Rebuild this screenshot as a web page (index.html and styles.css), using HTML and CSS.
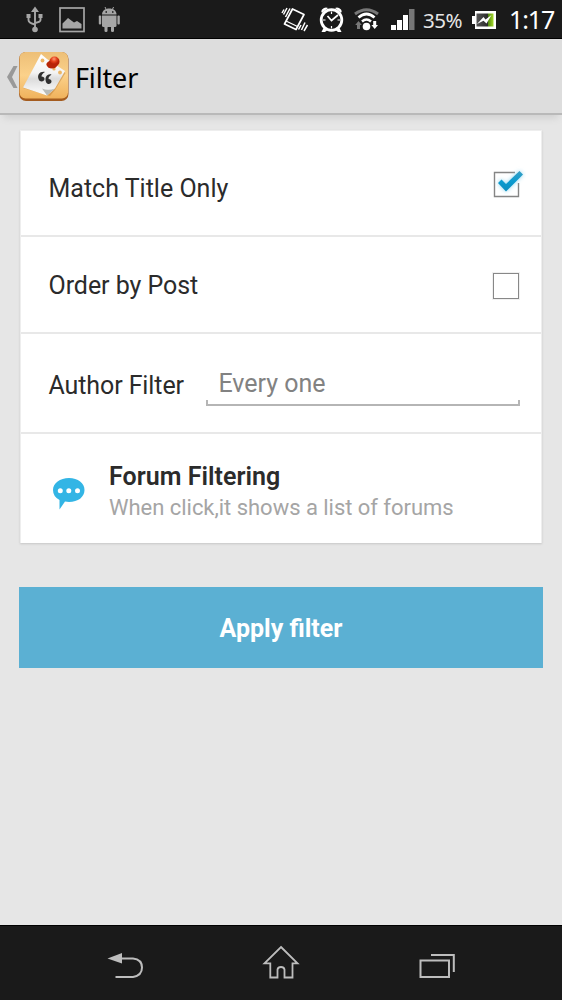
FILE: index.html
```html
<!DOCTYPE html>
<html lang="en">
<head>
<meta charset="utf-8">
<title>Filter</title>
<link rel="stylesheet" href="styles.css">
</head>
<body>
<div class="screen">
  <header class="status">
    <svg class="status-left" width="130" height="39" viewBox="0 0 130 39" fill="none" stroke="#a6a6a6">
      <path d="M35 10V29M28.500 17V20Q28.500 23 35 24.500M40.500 17V20Q40.500 22 35 23" stroke-width="1.900"/>
      <path d="M31 12 35 6.500 39 12Z" fill="#a6a6a6" stroke="none"/>
      <circle cx="35" cy="29.500" r="2.800" fill="#a6a6a6" stroke="none"/>
      <path d="M26.500 14H30.500V18H26.500ZM38.500 14H42.500V18H38.500Z" fill="#a6a6a6" stroke="none"/>
      <rect x="60" y="8" width="24" height="23.500" stroke-width="1.700"/>
      <path d="M62.500 28.500V23.500L68 18 74 22.500 77 21 81.500 24V28.500Z" fill="#a6a6a6" stroke="none"/>
      <g fill="#a6a6a6" stroke="none">
        <path d="M102 14.500C102 10.500 105.500 8.500 109.300 8.500S116.500 10.500 116.500 14.500Z"/>
        <path d="M102 15.500H116.500V25.500Q116.500 27 115 27H103.500Q102 27 102 25.500Z"/>
        <rect x="98.800" y="15.500" width="2.400" height="9" rx="1"/>
        <rect x="117.400" y="15.500" width="2.400" height="9" rx="1"/>
        <rect x="104.500" y="26" width="3" height="6" rx="1.300"/>
        <rect x="111" y="26" width="3" height="6" rx="1.300"/>
      </g>
      <path d="M105 7 106.500 10M113.600 7 112 10" stroke-width="1"/>
      <path d="M105.500 12H107M112 12H113.500" stroke="#1a1a1a" stroke-width="1.300"/>
    </svg>
    <svg class="status-right" width="145" height="39" viewBox="272 0 145 39" fill="none" stroke="#fff">
      <path d="M292.500 9 304 14.500 296 29.500 284.500 24Z" stroke-width="1.700" stroke-linejoin="round"/>
      <path d="M286 21 297.500 26.500" stroke-width="1.300"/>
      <path d="M287 8 283.500 14.500M290 8.500 285.500 17M284 9.500 282 13M301.500 30 305 22.500M304 31 307.500 25M298.500 29.500 301 25" stroke-width="1.500"/>
      <circle cx="331.500" cy="20" r="10.300" stroke-width="2.800"/>
      <path d="M322 9.500Q325 6.500 328 8L322 13Q320.500 11 322 9.500ZM341 9.500Q338 6.500 335 8L341 13Q342.500 11 341 9.500ZM323.500 28 321.500 32H325L327.500 30ZM339.500 28 341.500 32H338L335.500 30Z" fill="#fff" stroke="none"/>
      <path d="M327.500 16 331.500 20.500 338 15" stroke-width="1.700"/>
      <path d="M331.500 11.500V14M331.500 26V28.500M323 20H325.500M337.500 20H340" stroke-width="1.200"/>
      <path d="M355 14Q366.500 5.500 378 14" stroke="#777" stroke-width="3"/>
      <path d="M358.500 17.500Q366.500 10.500 374.500 17.500" stroke-width="2.800"/>
      <path d="M362 21.500Q366.500 17.500 371 21.500" stroke-width="2.500"/>
      <circle cx="366.500" cy="26.500" r="3.800" fill="#fff" stroke="none"/>
      <path d="M358.500 21 361.800 25H360V29H357V25H355.200Z" fill="#777" stroke="none"/>
      <path d="M374.700 29 371.400 25H373.200V21H376.200V25H378Z" fill="#fff" stroke="none"/>
      <path d="M391 25H396V30H391ZM397 20H402V30H397ZM403 15H408V30H403Z" fill="#fff" stroke="none"/>
      <path d="M409 9H414.500V30H409Z" fill="#777" stroke="none"/>
    </svg>
    <span class="percent">35%</span>
    <svg class="battery" width="25" height="18" viewBox="0 0 25 18">
      <defs><linearGradient id="cell" x1="0" x2="1"><stop stop-color="#555"/><stop offset=".65" stop-color="#2b2b2b"/><stop offset=".7" stop-color="#558a12"/><stop offset="1" stop-color="#a5db29"/></linearGradient></defs>
      <path d="M3 0H24V18H3V13H0V5H3Z" fill="#fff"/>
      <path d="M4.500 2.500H21.500V15.500H4.500Z" fill="url(#cell)"/>
      <path d="M5 13 11.500 6 13.500 8.500 19.500 4 14.500 12.500 11.500 9.800Z" fill="#fff"/>
    </svg>
    <span class="clock">1:17</span>
  </header>

  <div class="actionbar">
    <svg class="chevron" width="12" height="24" viewBox="0 0 12 24"><path d="M10.500 1 5 12 10.500 23H6.500L0 12 6.500 1Z" fill="#999"/></svg>
    <svg class="logo" width="51" height="51" viewBox="0 0 51 51">
      <defs>
        <linearGradient id="wood" x2="0" y2="1"><stop stop-color="#edbf77"/><stop offset=".5" stop-color="#fbd18a"/><stop offset="1" stop-color="#f0b25c"/></linearGradient>
        <linearGradient id="paper" x2="0" y2="1"><stop stop-color="#fff"/><stop offset=".45" stop-color="#f3f3f3"/><stop offset=".6" stop-color="#dcdcdc"/><stop offset="1" stop-color="#fff"/></linearGradient>
        <radialGradient id="pin" cx=".45" cy=".25"><stop stop-color="#ff9a72"/><stop offset=".55" stop-color="#e5421d"/><stop offset="1" stop-color="#b92408"/></radialGradient>
      </defs>
      <rect x="0" y="1" width="49.500" height="49" rx="7" fill="#a45c1f"/>
      <rect x="0.500" y="1" width="48.500" height="46.500" rx="6" fill="url(#wood)"/>
      <path d="M22 4 46.500 22 36 39 31 45 4 37Z" fill="#b97936" opacity=".45"/>
      <path d="M22 3 28 8 46 20 36 37.500 28 44.500 4 36.500Z" fill="url(#paper)"/>
      <path d="M28 44.500 23 37.500Q29 40 36 37.500Z" fill="#b9bcb9"/>
      <g fill="#edb564"><circle cx="23.500" cy="9.500" r="1.900"/><circle cx="29" cy="13" r="1.600"/><circle cx="35" cy="18" r="1.600"/><circle cx="41" cy="21.500" r="1.900"/></g>
      <path d="M26 21C21 20 18 24 19.500 28 21 32 25.500 30.500 25.500 28Q25.500 25.500 22.500 25.500 22.500 23 26 21ZM32.500 23.500C27.500 22.500 25.500 27 27 31 28.500 34.500 32.500 33 32.500 30.500Q32.500 28 29.500 28 29.500 25.500 32.500 23.500Z" fill="#303030"/>
      <ellipse cx="33" cy="13.500" rx="5.500" ry="4" fill="#b72609"/>
      <circle cx="35.500" cy="10.500" r="5" fill="url(#pin)"/>
    </svg>
    <h1 class="title">Filter</h1>
  </div>

  <main class="content">
    <section class="card">
      <div class="row row-match">
        <span class="label label-match">Match Title Only</span>
        <svg class="check" width="35" height="35" viewBox="0 0 35 35">
          <defs>
            <filter id="glow" x="-40%" y="-40%" width="180%" height="180%"><feGaussianBlur stdDeviation="2"/></filter>
            <linearGradient id="tick" x2="0" y2="1"><stop stop-color="#399fc4"/><stop offset=".5" stop-color="#0b9bd0"/><stop offset="1" stop-color="#0d8dbd"/></linearGradient>
          </defs>
          <path d="M24 6.500H3.500V30.500H27.500V17" fill="none" stroke="#858585" stroke-width="1.400"/>
          <path d="M7 17 10.500 13.500 15 18 28.500 5 32 8.500 15 25.500Z" fill="#8bd4ef" filter="url(#glow)"/>
          <path d="M7 17 10.500 13.500 15 18 28.500 5 32 8.500 15 25.500Z" fill="url(#tick)"/>
        </svg>
      </div>
      <div class="row row-order">
        <span class="label label-order">Order by Post</span>
        <span class="box"></span>
      </div>
      <div class="row row-author">
        <span class="label label-author">Author Filter</span>
        <div class="field"><span class="hint">Every one</span></div>
      </div>
      <div class="row row-forum">
        <svg class="bubble" width="32" height="32" viewBox="0 0 32 32">
          <path d="M16 0C25 0 31.500 5 31.500 12S25 24 16 24Q14 24 12 23.600L6.500 31.500V22Q0 18.500 0 12C0 5 7 0 16 0Z" fill="#33b5e5"/>
          <g fill="#fff"><circle cx="7.300" cy="12.700" r="2.500"/><circle cx="15.800" cy="12.700" r="2.500"/><circle cx="24.500" cy="12.700" r="2.500"/></g>
        </svg>
        <div class="forum">
          <span class="forum-title">Forum Filtering</span>
          <span class="forum-note">When click,it shows a list of forums</span>
        </div>
      </div>
    </section>
    <div class="apply"><span>Apply filter</span></div>
  </main>

  <nav class="nav">
    <svg width="562" height="75" viewBox="0 925 562 75" fill="none" stroke="#bdbdbd" stroke-width="2">
      <path d="M120 958.500H133Q142 959.500 142 967.500T133 977H115.500"/>
      <path d="M107.500 958.500 122 953V963.500Z" fill="#bdbdbd" stroke="none"/>
      <path d="M281 947 297.500 963.300H292.500V977.500H284.500V969.500Q284 967 281 967T277.500 969.500V977.500H270.300V963.300H264.500Z" stroke-width="1.800"/>
      <path d="M420.500 960.500H449V977H420.500ZM431 955H453.800V972"/>
    </svg>
  </nav>
</div>
</body>
</html>
```
FILE: styles.css
```css
* { box-sizing: border-box; }
body {
  margin: 0;
  font-family: Roboto, sans-serif;
  color: #2b2b2b;
}
.screen {
  width: 562px;
  height: 1000px;
  display: flex;
  flex-direction: column;
  background: #e6e6e6;
  overflow: hidden;
}
svg { display: block; flex: none; }
.status {
  height: 39px;
  flex: none;
  display: flex;
  align-items: center;
  background: #1a1a1a;
  border-bottom: 1px solid #000;
  color: #fff;
  font-family: "Noto Sans", sans-serif;
  white-space: nowrap;
}
.status-left { margin-right: 142px; }
.percent {
  width: 49px;
  margin-left: 6px;
  font-size: 20.500px;
  font-weight: 400;
  color: #e6e6e6;
  letter-spacing: -0.5px;
  padding-top: 1px;
}
.battery { margin-top: 1px; }
.clock {
  margin-left: 12px;
  font-size: 25px;
  letter-spacing: -1.1px;
}
.actionbar {
  height: 76px;
  flex: none;
  display: flex;
  align-items: center;
  padding-left: 7px;
  background: #dddddd;
  border-bottom: 2px solid #b9b9b9;
  box-shadow: 0 7px 7px -4px #cfcfcf;
}
.chevron { margin-top: 1px; }
.title {
  margin: 2px 0 0 5px;
  font: 400 27px "Noto Sans", sans-serif;
  color: #000;
  letter-spacing: -0.15px;
}
.content {
  flex: 1;
  padding: 15px 19px 0 20px;
}
.card {
  width: 522px;
  height: 413px;
  background: #fff;
  border: 1px solid #eee;
  border-bottom: 0;
  box-shadow: 0 1px 2px #c6c6c6;
}
.row {
  display: flex;
  align-items: center;
  padding-left: 27.500px;
  white-space: nowrap;
  border-bottom: 2px solid #e8e8e8;
}
.row-match { height: 106px; padding-top: 11px; padding-right: 15px; justify-content: space-between; }
.row-order { height: 97px; padding-top: 2px; padding-right: 22px; justify-content: space-between; }
.row-author { height: 100px; padding-top: 5px; }
.row-forum { height: 109px; padding-left: 32px; border-bottom: 0; }
.label { font-size: 25px; line-height: 30px; }
.label-order { letter-spacing: -0.05px; }
.label-author { letter-spacing: -0.1px; }
.check { margin-top: -11px; }
.box { width: 26px; height: 26px; border: 1.500px solid #888; outline: 1px solid #f0f0f0; }
.field {
  width: 314px;
  height: 36px;
  margin: 4px 0 0 22px;
  padding-left: 12.500px;
  background: linear-gradient(#b5b5b5, #b5b5b5) bottom / 100% 2px no-repeat,
    linear-gradient(#b5b5b5, #b5b5b5) left bottom / 2px 6px no-repeat,
    linear-gradient(#b5b5b5, #b5b5b5) right bottom / 2px 6px no-repeat;
}
.hint { color: #828282; font-size: 25px; line-height: 28px; }
.bubble { margin-top: 10px; }
.forum { display: flex; flex-direction: column; margin-left: 24px; padding-top: 7px; }
.forum-title { font-size: 25px; font-weight: 600; line-height: 32px; letter-spacing: 0.04px; }
.forum-note { font-size: 22px; line-height: 30px; color: #a5a5a5; letter-spacing: -0.03px; }
.apply {
  width: 524px;
  height: 81px;
  margin: 44px 0 0 -1px;
  padding-top: 2px;
  display: flex;
  align-items: center;
  justify-content: center;
  background: #5bb0d3;
  color: #fff;
  font-size: 25px;
  font-weight: 700;
}
.nav { height: 75px; flex: none; background: #1a1a1a; border-top: 1px solid #000; }
.nav svg { margin-top: -1px; }
```
